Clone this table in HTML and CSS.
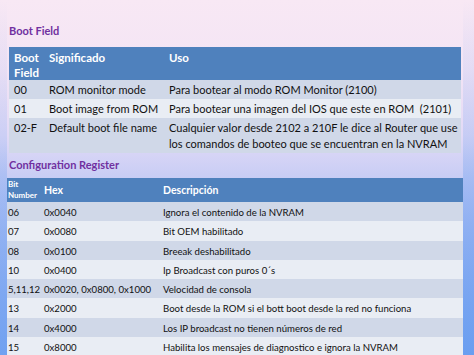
FILE: index.html
```html
<!DOCTYPE html>
<html lang="es">
<head>
<meta charset="utf-8">
<title>Boot Field / Configuration Register</title>
<link rel="stylesheet" href="styles.css">
</head>
<body>
<main class="slide">
  <section class="sec sec-boot">
    <h2 class="sec-title">Boot Field</h2>
    <table class="tbl tbl-boot">
      <colgroup><col class="c1"><col class="c2"><col class="c3"></colgroup>
      <thead>
        <tr><th>Boot<br>Field</th><th>Significado</th><th>Uso</th></tr>
      </thead>
      <tbody>
        <tr><td>00</td><td>ROM monitor mode</td><td>Para bootear al modo ROM Monitor (2100)</td></tr>
        <tr><td>01</td><td>Boot image from ROM</td><td>Para bootear una imagen del IOS que este en ROM&nbsp; (2101)</td></tr>
        <tr><td>02-F</td><td>Default boot file name</td><td>Cualquier valor desde 2102 a 210F le dice al Router que use<br>los comandos de booteo que se encuentran en la NVRAM</td></tr>
      </tbody>
    </table>
  </section>
  <section class="sec sec-conf">
    <h2 class="sec-title">Configuration Register</h2>
    <table class="tbl tbl-conf">
      <colgroup><col class="d1"><col class="d2"><col class="d3"></colgroup>
      <thead>
        <tr><th class="bitnum">Bit<br>Number</th><th>Hex</th><th>Descripción</th></tr>
      </thead>
      <tbody>
        <tr><td>06</td><td>0x0040</td><td>Ignora el contenido de la NVRAM</td></tr>
        <tr><td>07</td><td>0x0080</td><td>Bit OEM habilitado</td></tr>
        <tr><td>08</td><td>0x0100</td><td>Breeak deshabilitado</td></tr>
        <tr><td>10</td><td>0x0400</td><td>Ip Broadcast con puros 0´s</td></tr>
        <tr><td>5,11,12</td><td>0x0020, 0x0800, 0x1000</td><td>Velocidad de consola</td></tr>
        <tr><td>13</td><td>0x2000</td><td>Boot desde la ROM si el bott boot desde la red no funciona</td></tr>
        <tr><td>14</td><td>0x4000</td><td>Los IP broadcast no tienen números de red</td></tr>
        <tr><td>15</td><td>0x8000</td><td>Habilita los mensajes de diagnostico e ignora la NVRAM</td></tr>
      </tbody>
    </table>
  </section>
</main>
</body>
</html>
```

FILE: styles.css
```css
html, body {
  margin: 0;
  padding: 0;
  height: 100%;
}
body {
  width: 474px;
  height: 355px;
  overflow: hidden;
  font-family: Lato, "Open Sans", sans-serif;
  color: #111;
  background:
    linear-gradient(to bottom, rgba(110,160,240,0) 0%, rgba(110,160,240,0.25) 40%, rgba(100,155,240,0.9) 100%) right top / 11px 100% no-repeat,
    linear-gradient(to bottom, rgba(110,160,240,0) 0%, rgba(110,160,240,0.2) 40%, rgba(100,155,240,0.8) 100%) left top / 7px 100% no-repeat,
    linear-gradient(to bottom, #f8e8f4 0%, #f3e4f5 20%, #e2daf6 38%, #c8cdf5 50%, #b6c3f4 65%, #a9bcf3 85%, #a4baf3 100%);
}
.slide {
  display: flex;
  flex-direction: column;
}
.sec-title {
  margin: 0;
  font-size: 11px;
  line-height: 14px;
  font-weight: 700;
  color: #7030a0;
}
.sec-boot {
  padding: 24px 13px 0 9px;
}
.sec-boot .sec-title {
  margin-bottom: 9px;
}
.sec-conf {
  padding: 5px 11px 0 7px;
}
.sec-conf .sec-title {
  margin-left: 2px;
  margin-bottom: 6px;
}
.tbl {
  border-collapse: collapse;
  border-spacing: 0;
  table-layout: fixed;
  width: 100%;
}
.tbl th {
  background: #4f81bd;
  color: #fff;
  font-weight: 700;
  text-align: left;
}
.tbl tbody tr:nth-child(odd) td { background: #d0d8e8; }
.tbl tbody tr:nth-child(even) td { background: #e9edf4; }

/* Boot field table */
.tbl-boot .c1 { width: 35px; }
.tbl-boot .c2 { width: 120px; }
.tbl-boot th {
  font-size: 11.5px;
  line-height: 15px;
  padding: 3px 0 0 5px;
  height: 30px;
  vertical-align: top;
}
.tbl-boot td {
  font-size: 11px;
  line-height: 16px;
  padding: 2px 0 1px 5px;
  vertical-align: top;
  white-space: nowrap;
}

/* Configuration register table */
.tbl-conf .d1 { width: 36px; }
.tbl-conf .d2 { width: 119px; }
.tbl-conf th {
  font-size: 10.5px;
  line-height: 11px;
  padding: 0 1px;
  height: 23px;
  vertical-align: middle;
}
.tbl-conf th.bitnum {
  font-size: 8px;
  line-height: 11px;
  padding-top: 0;
  padding-bottom: 1px;
}
.tbl-conf td {
  font-size: 9.6px;
  line-height: 15.3px;
  padding: 3px 1px 1px;
  vertical-align: top;
  white-space: nowrap;
}
```
